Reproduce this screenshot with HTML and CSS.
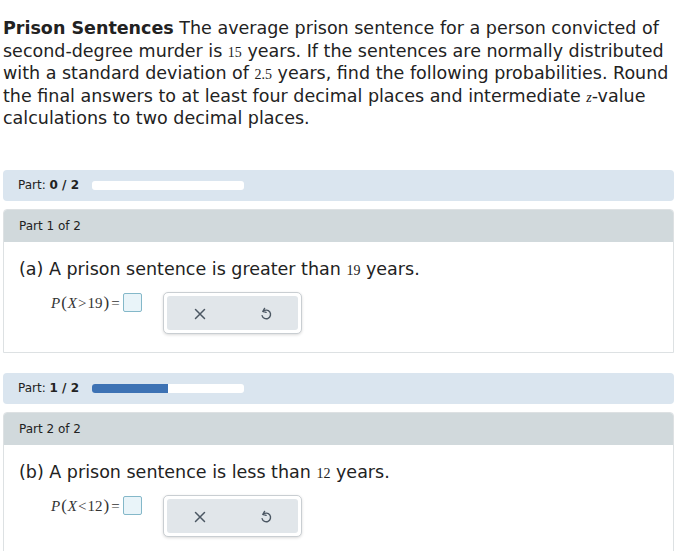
FILE: index.html
```html
<!DOCTYPE html>
<html>
<head>
<meta charset="utf-8">
<link rel="stylesheet" href="styles.css">
</head>
<body>
<div class="page">
  <p class="intro"><b>Prison Sentences</b> The average prison sentence for a person convicted of second-degree murder is <span class="num">15</span> years. If the sentences are normally distributed with a standard deviation of <span class="num">2.5</span> years, find the following probabilities. Round the final answers to at least four decimal places and intermediate <span class="var">z</span>-value calculations to two decimal places.</p>

  <section class="part">
    <div class="progress">
      <span class="plabel">Part: <b>0 / 2</b></span>
      <span class="track"><span class="fill" style="width:0%"></span></span>
    </div>
    <div class="card">
      <div class="card-head">Part 1 of 2</div>
      <div class="card-body">
        <div class="question">(a) A prison sentence is greater than <span class="num">19</span> years.</div>
        <div class="answer">
          <span class="math"><i>P</i><span class="paren">(</span><i>X</i><span class="op">&gt;</span>19<span class="paren">)</span><span class="op">=</span></span>
          <span class="box"></span>
          <div class="tools">
            <div class="tools-inner">
              <svg class="ico" width="14" height="14" viewBox="0 0 14 14"><path d="M2.5 2.5 L11.5 11.5 M11.5 2.5 L2.5 11.5" stroke="#4b5763" stroke-width="1.5" fill="none" stroke-linecap="round"/></svg>
              <svg class="ico" width="14" height="14" viewBox="0 0 14 14"><path d="M4.2 4.4 A4.3 4.3 0 1 1 3.1 8.6" stroke="#4b5763" stroke-width="1.4" fill="none" stroke-linecap="round"/><path d="M5.6 1.4 L3.9 4.4 L7.1 5.4" stroke="#4b5763" stroke-width="1.4" fill="none" stroke-linecap="round" stroke-linejoin="round"/></svg>
            </div>
          </div>
        </div>
      </div>
    </div>
  </section>

  <section class="part">
    <div class="progress">
      <span class="plabel">Part: <b>1 / 2</b></span>
      <span class="track"><span class="fill" style="width:50%"></span></span>
    </div>
    <div class="card">
      <div class="card-head">Part 2 of 2</div>
      <div class="card-body">
        <div class="question">(b) A prison sentence is less than <span class="num">12</span> years.</div>
        <div class="answer">
          <span class="math"><i>P</i><span class="paren">(</span><i>X</i><span class="op">&lt;</span>12<span class="paren">)</span><span class="op">=</span></span>
          <span class="box"></span>
          <div class="tools">
            <div class="tools-inner">
              <svg class="ico" width="14" height="14" viewBox="0 0 14 14"><path d="M2.5 2.5 L11.5 11.5 M11.5 2.5 L2.5 11.5" stroke="#4b5763" stroke-width="1.5" fill="none" stroke-linecap="round"/></svg>
              <svg class="ico" width="14" height="14" viewBox="0 0 14 14"><path d="M4.2 4.4 A4.3 4.3 0 1 1 3.1 8.6" stroke="#4b5763" stroke-width="1.4" fill="none" stroke-linecap="round"/><path d="M5.6 1.4 L3.9 4.4 L7.1 5.4" stroke="#4b5763" stroke-width="1.4" fill="none" stroke-linecap="round" stroke-linejoin="round"/></svg>
            </div>
          </div>
        </div>
      </div>
    </div>
  </section>
</div>
</body>
</html>
```

FILE: styles.css
```css
html, body {
  margin: 0;
  padding: 0;
  background: #ffffff;
}
body {
  font-family: "DejaVu Sans", Verdana, sans-serif;
  color: #222222;
}
.page {
  width: 671px;
  padding: 0 0 0 3px;
}
.intro {
  margin: 17px 0 0 0;
  font-size: 17.5px;
  line-height: 22.6px;
}
.intro b {
  font-weight: bold;
}
.num {
  font-family: "Liberation Serif", serif;
  font-size: 14px;
  line-height: 0;
}
.var {
  font-family: "Liberation Serif", serif;
  font-style: italic;
  font-size: 14px;
  line-height: 0;
}
.part {
  margin-top: 40px;
}
.part + .part {
  margin-top: 20px;
}
.progress {
  height: 31px;
  background: #dae5ef;
  border-radius: 4px;
  display: flex;
  align-items: center;
  padding-left: 15px;
  font-size: 12px;
  color: #222;
}
.plabel {
  width: 74px;
}
.plabel b {
  font-weight: bold;
}
.track {
  width: 152px;
  height: 9px;
  background: #ffffff;
  border-radius: 3px;
  overflow: hidden;
  display: flex;
}
.fill {
  display: block;
  height: 100%;
  background: #3d72b4;
}
.card {
  margin-top: 8px;
  border: 1px solid #dde1e3;
  border-radius: 4px 4px 0 0;
  overflow: hidden;
}
.card-head {
  height: 32px;
  background: #d1d9dc;
  display: flex;
  align-items: center;
  padding-left: 15px;
  font-size: 12px;
  color: #222;
}
.card-body {
  padding: 15px 0 0 15px;
  box-sizing: border-box;
  height: 110px;
}
.question {
  font-size: 17.5px;
  line-height: 24px;
}
.answer {
  display: flex;
  align-items: flex-start;
  margin-top: 11px;
  padding-left: 32px;
}
.math {
  font-family: "Liberation Serif", serif;
  font-size: 15px;
  color: #333;
  margin-top: 2px;
  display: flex;
  align-items: center;
  height: 19px;
}
.math i {
  font-style: italic;
}
.paren {
  font-size: 17px;
  margin: 0 1px;
}
.op {
  margin: 0 1px;
}
.box {
  width: 17px;
  height: 17px;
  border: 1px solid #84b8c9;
  background: #e9f4f9;
  border-radius: 2px;
  margin-left: 2px;
  margin-top: 1px;
}
.tools {
  margin-left: 21px;
  width: 139px;
  height: 42px;
  border: 1px solid #c9ced2;
  border-radius: 5px;
  background: #ffffff;
  box-shadow: 0 1px 3px rgba(0,0,0,0.15);
  padding: 3px;
  box-sizing: border-box;
}
.tools-inner {
  height: 100%;
  background: #e1e6ea;
  border-radius: 3px;
  display: flex;
  align-items: center;
  gap: 52px;
  padding-left: 26px;
}
.ico {
  display: block;
  margin-top: 2px;
}
```
